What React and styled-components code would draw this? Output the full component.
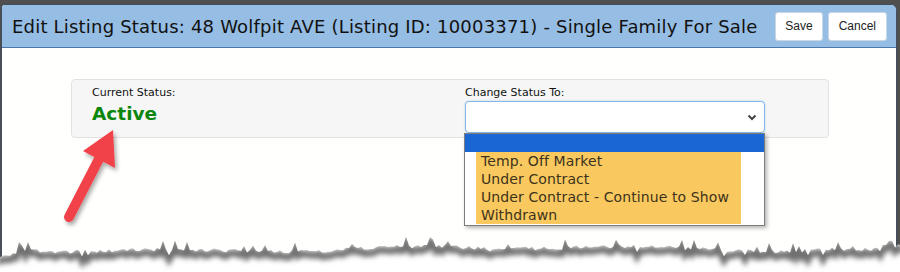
import styled, { createGlobalStyle } from "styled-components"

const Global = createGlobalStyle`
html, body {
  margin: 0;
  padding: 0;
  background: #ffffff;
}
`

const Frame = styled.div`
position: relative;
width: 900px;
height: 272px;
overflow: hidden;
background: #4f4f4f;
padding: 4px 3px 0 1px;
box-sizing: border-box;
`

const Modal = styled.div`
height: 100%;
background: #fffffd;
border: 1px solid #3f4f60;
border-bottom: none;
border-radius: 4px 6px 0 0;
overflow: hidden;
`

const Header = styled.div`
display: flex;
align-items: center;
justify-content: space-between;
height: 43px;
box-sizing: border-box;
padding: 0 9px 0 10px;
background: #96bde3;
border-bottom: 1px solid #4a78ab;
`

const Title = styled.h1`
margin: 0;
font-family: "DejaVu Sans", Verdana, sans-serif;
font-weight: normal;
font-size: 18px;
letter-spacing: 0.2px;
color: #111;
white-space: nowrap;
`

const Buttons = styled.div`
display: flex;
gap: 5px;
`

const Button = styled.button`
height: 29px;
padding: 0 ${({ wide }) => (wide ? "10px" : "9px")};
background: #ffffff;
border: 1px solid #c9d6e3;
border-radius: 3px;
font-family: "Liberation Sans", Arial, sans-serif;
font-size: 12px;
color: #222;
`

const Body = styled.div`
padding: 31px 0 0 69px;
`

const Panel = styled.div`
display: grid;
grid-template-columns: 1fr 1fr;
width: 758px;
height: 59px;
box-sizing: border-box;
padding: 6px 5px 5px;
background: #f6f6f6;
border: 1px solid #e2e2e2;
border-radius: 4px;
`

const Column = styled.div`
padding: 0 15px;
`

const Label = styled.div`
font-family: "DejaVu Sans", Verdana, sans-serif;
font-size: 11px;
color: #111;
line-height: 13px;
`

const Status = styled.div`
margin-top: 4px;
font-family: "DejaVu Sans", Verdana, sans-serif;
font-weight: bold;
font-size: 18.5px;
color: #0c860c;
line-height: 22px;
`

const SelectWrap = styled.div`
position: relative;
width: 300px;
margin-top: 2px;
`

const SelectBox = styled.div`
height: 32px;
box-sizing: border-box;
display: flex;
align-items: center;
justify-content: flex-end;
padding-right: 7px;
background: #fff;
border: 1px solid #86b7e8;
border-radius: 4px;
box-shadow: 0 0 2px rgba(80, 150, 230, 0.45);
`

const OptionList = styled.div`
position: absolute;
top: 32px;
left: -1px;
width: 301px;
box-sizing: border-box;
background: #fff;
border: 1px solid #7d7d7d;
box-shadow: 2px 2px 4px rgba(0, 0, 0, 0.3);
padding-bottom: 1px;
`

const Selected = styled.div`
height: 18px;
background: #1a66d2;
`

const Highlight = styled.div`
margin-left: 11px;
width: 265px;
background: #f9c95f;
padding-left: 5px;
box-sizing: border-box;
`

const Option = styled.div`
font-family: "DejaVu Sans", Verdana, sans-serif;
font-size: 14px;
letter-spacing: 0.1px;
line-height: 18px;
color: #3d321c;
white-space: nowrap;
`

const Overlay = styled.svg`
position: absolute;
left: 0;
top: 0;
pointer-events: none;
`

// jagged tear line along the bottom
const tearPoints = (() => {
  const pts = []
  let seed = 7
  const rnd = () => {
    seed = (seed * 9301 + 49297) % 233280
    return seed / 233280
  }
  for (let x = -2; x <= 904; x += 3) {
    let base = 249 + Math.sin(x / 37) * 1.5 + Math.sin(x / 113) * 2
    if (x < 35) base = 258 - (x / 35) * 10
    if (x > 880) base = 246
    let y = base + (rnd() - 0.5) * 4
    if (rnd() > 0.93) y -= 5 + rnd() * 4
    if (rnd() > 0.95) y += 4
    pts.push([x, y])
  }
  return pts
})()

const tearLine = tearPoints.map(([x, y], i) => `${i ? "L" : "M"}${x} ${y.toFixed(1)}`).join(" ")
const belowTear = `${tearLine} L904 280 L-2 280 Z`

const Chevron = () => (
  <svg width="10" height="7" viewBox="0 0 10 7">
    <path d="M1.5 1.5 L5 5 L8.5 1.5" fill="none" stroke="#444" strokeWidth="2" />
  </svg>
)

const Annotations = () => (
  <Overlay width="900" height="272" viewBox="0 0 900 272">
    <defs>
      <filter id="ash" x="-30%" y="-30%" width="160%" height="160%">
        <feDropShadow dx="2" dy="3" stdDeviation="2" floodColor="#000" floodOpacity="0.35" />
      </filter>
      <filter id="blur" x="-5%" y="-50%" width="110%" height="200%">
        <feGaussianBlur stdDeviation="2.5" />
      </filter>
      <clipPath id="below">
        <path d={belowTear} />
      </clipPath>
    </defs>
    <g filter="url(#ash)">
      <line x1="69" y1="217" x2="101" y2="155" stroke="#f2424a" strokeWidth="10" strokeLinecap="round" />
      <polygon points="113,130 115,168 83,151" fill="#f2424a" />
    </g>
    <path d={belowTear} fill="#ffffff" />
    <g clipPath="url(#below)">
      <path d={tearLine} transform="translate(0 4)" fill="none" stroke="#6f6f6f" strokeWidth="7" filter="url(#blur)" />
    </g>
  </Overlay>
)

export default function App() {
  return (
    <>
      <Global />
      <Frame>
        <Modal>
          <Header>
            <Title>Edit Listing Status: 48 Wolfpit AVE (Listing ID: 10003371) - Single Family For Sale</Title>
            <Buttons>
              <Button>Save</Button>
              <Button wide>Cancel</Button>
            </Buttons>
          </Header>
          <Body>
            <Panel>
              <Column>
                <Label>Current Status:</Label>
                <Status>Active</Status>
              </Column>
              <Column>
                <Label>Change Status To:</Label>
                <SelectWrap>
                  <SelectBox>
                    <Chevron />
                  </SelectBox>
                  <OptionList>
                    <Selected />
                    <Highlight>
                      <Option>Temp. Off Market</Option>
                      <Option>Under Contract</Option>
                      <Option>Under Contract - Continue to Show</Option>
                      <Option>Withdrawn</Option>
                    </Highlight>
                  </OptionList>
                </SelectWrap>
              </Column>
            </Panel>
          </Body>
        </Modal>
        <Annotations />
      </Frame>
    </>
  )
}
